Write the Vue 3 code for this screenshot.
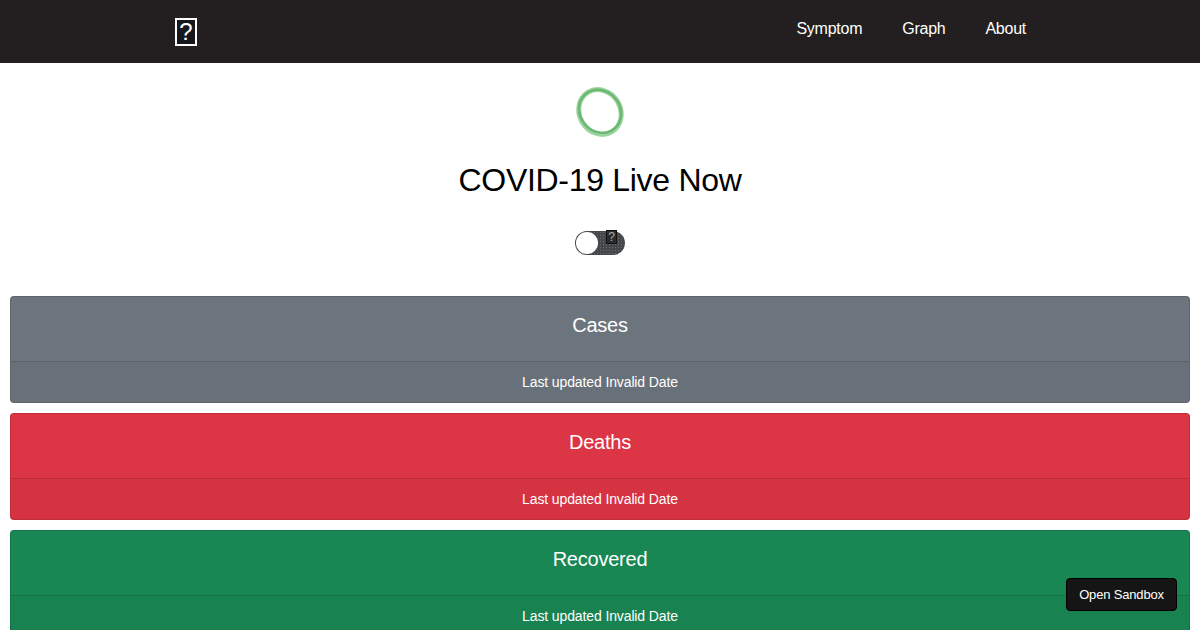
<script setup>
const links = ['Symptom', 'Graph', 'About']
const cards = [
  { title: 'Cases', tone: 'grey' },
  { title: 'Deaths', tone: 'red' },
  { title: 'Recovered', tone: 'green' }
]
</script>

<template>
  <div class="page">
    <nav class="navbar">
      <div class="nav-inner">
        <span class="brand"><span class="tofu">?</span></span>
        <ul class="links">
          <li v-for="l in links" :key="l">{{ l }}</li>
        </ul>
      </div>
    </nav>
    <main class="main">
      <svg class="spinner" width="50" height="50" viewBox="0 0 50 50" aria-hidden="true">
        <ellipse cx="25" cy="25" rx="20.5" ry="23" transform="rotate(-32 25 25)" fill="none" stroke="#4caf50" stroke-opacity=".55" stroke-width="5" />
        <ellipse cx="25.5" cy="24.5" rx="20" ry="22.5" transform="rotate(-40 25 25)" fill="none" stroke="#3fa34d" stroke-opacity=".55" stroke-width="2.5" />
      </svg>
      <h1 class="title">COVID-19 Live Now</h1>
      <div class="toggle">
        <span class="knob"></span>
        <span class="mini-tofu">?</span>
      </div>
      <section class="cards">
        <article v-for="c in cards" :key="c.title" class="card" :class="c.tone">
          <div class="card-body"><h5>{{ c.title }}</h5></div>
          <div class="card-footer">Last updated Invalid Date</div>
        </article>
      </section>
    </main>
    <button class="sandbox">Open Sandbox</button>
  </div>
</template>

<style>
html, body { margin: 0; overflow: hidden; }
</style>

<style scoped>
.page {
  height: 630px;
  overflow: hidden;
  font-family: "Liberation Sans", Arial, sans-serif;
  font-size: 16px;
  line-height: 1.5;
  color: #212529;
  background: #fff;
}
.navbar { height: 63px; background: #231f20; }
.nav-inner {
  padding: 0 174px 0 175px;
  box-sizing: border-box;
  height: 100%;
  display: flex;
  justify-content: space-between;
}
.brand { display: flex; align-items: flex-start; padding-top: 18px; }
.tofu {
  display: block;
  box-sizing: border-box;
  width: 22px;
  height: 28px;
  border: 2px solid #fff;
  background: #15171c;
  color: #fff;
  font-size: 24px;
  line-height: 24px;
  text-align: center;
}
.links {
  list-style: none;
  margin: 0;
  padding: 17px 0 0 0;
  display: flex;
  gap: 40px;
  color: #fff;
  height: 24px;
  letter-spacing: -0.25px;
}
.main { display: flex; flex-direction: column; align-items: center; padding: 24px 10px 0; }
.spinner { display: block; margin-bottom: 24px; }
.title {
  margin: 0 0 32px;
  font-size: 32px;
  font-weight: 400;
  line-height: 38px;
  letter-spacing: -0.3px;
  color: #000;
}
.toggle {
  position: relative;
  box-sizing: border-box;
  width: 50px;
  height: 24px;
  border-radius: 12px;
  background-color: #45484b;
  background-image: radial-gradient(#6a6a6a 0.7px, transparent 0.8px);
  background-size: 3px 3px;
  margin-bottom: 41px;
}
.knob {
  position: absolute;
  left: 1px;
  top: 1px;
  width: 22px;
  height: 22px;
  box-sizing: border-box;
  border-radius: 50%;
  background: #fff;
}
.mini-tofu {
  position: absolute;
  left: 31px;
  top: -1px;
  width: 11px;
  height: 14px;
  box-sizing: border-box;
  border: 1px solid #111;
  background: #2b2b2b;
  font-size: 12px;
  line-height: 12px;
  text-align: center;
  color: #aaa;
}
.cards { align-self: stretch; display: flex; flex-direction: column; gap: 10px; }
.card {
  border: 1px solid rgba(0,0,0,.125);
  border-radius: 4px;
  color: #fff;
  text-align: center;
}
.grey { background-color: #6c757d; }
.red { background-color: #dc3545; }
.green { background-color: #198754; }
.card-body { padding: 16px 16px 24px; }
.card-body h5 { margin: 0; font-size: 20px; font-weight: 400; line-height: 24px; letter-spacing: -0.22px; }
.card-footer {
  padding: 8px 16px;
  font-size: 14px;
  line-height: 24px;
  letter-spacing: -0.12px;
  background: rgba(0,0,0,.03);
  border-top: 1px solid rgba(0,0,0,.125);
}
.sandbox {
  position: fixed;
  left: 1066px;
  top: 578px;
  width: 111px;
  height: 33px;
  padding: 0;
  border: 1px solid #000;
  border-radius: 4px;
  background: #151515;
  color: #fff;
  font-family: "Liberation Sans", Arial, sans-serif;
  font-size: 13px;
  letter-spacing: -0.17px;
}
</style>
